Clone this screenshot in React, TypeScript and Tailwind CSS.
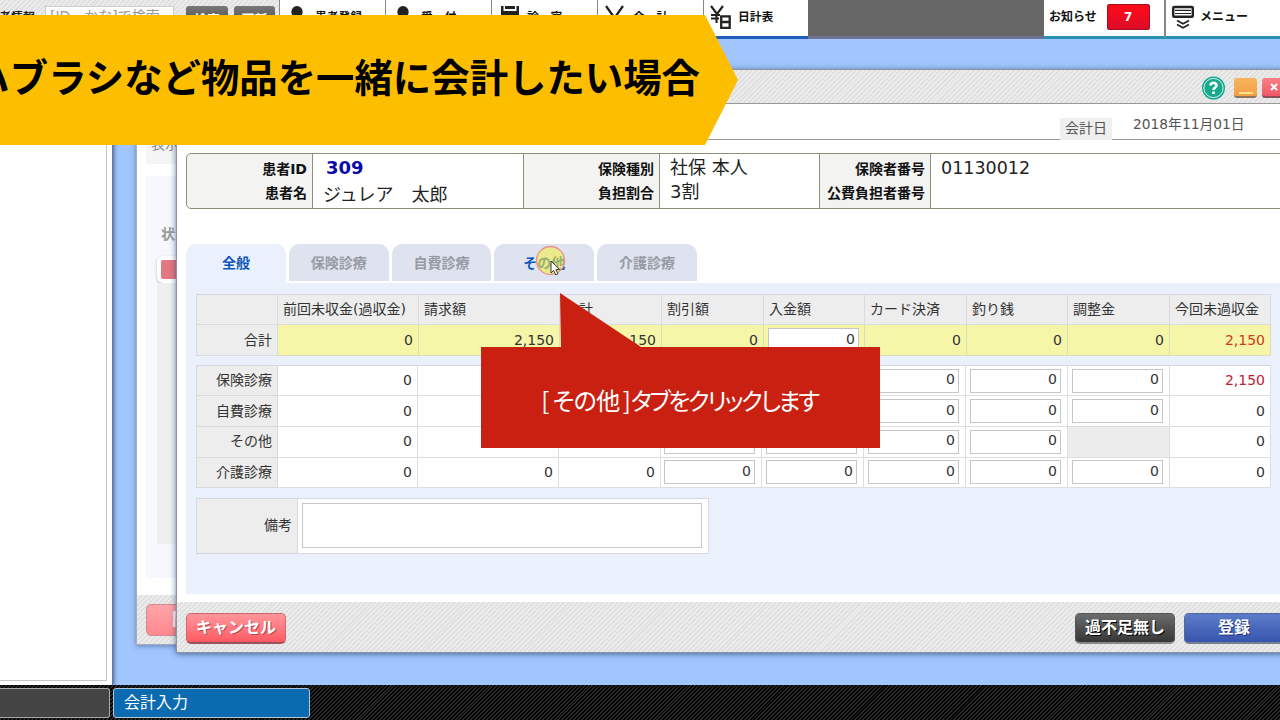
import React, { useState } from 'react';
import clsx from 'clsx';

const stripes = 'bg-[repeating-linear-gradient(135deg,#dedede_0px,#dedede_1.4px,#ebebeb_1.4px,#ebebeb_3.5px)]';

const PersonIcon = () => (
  <svg width="22" height="28" viewBox="0 0 22 28" fill="#222">
    <ellipse cx="10" cy="9" rx="5.7" ry="6" />
    <path d="M0 28c0-9 4-12 10-12s10 3 10 12z" />
  </svg>
);

const ClipboardIcon = () => (
  <svg width="18" height="28" viewBox="0 0 18 28" fill="#222">
    <path d="M0 3h2.500v5h13V3H18v24H0z" />
    <path d="M4 3h10v3H4z" />
  </svg>
);

const YenIcon = () => (
  <svg width="20" height="28" viewBox="0 0 20 28" fill="none" stroke="#222" strokeWidth="2.2">
    <path d="M1 3l8.500 12L18 3M9.500 15v12M3 17h13M3 21h13" />
  </svg>
);

const DailyIcon = () => (
  <svg width="24" height="28" viewBox="0 0 24 28" fill="none" stroke="#222" strokeWidth="2.1">
    <path d="M1 3l6 8 6-8M6.500 11v9M1 12h9M1 15.500h8" />
    <path d="M11.200 13.300h8.500v11.500h-8.500zM11.200 19h8.500" strokeWidth="2.3" />
  </svg>
);

const MenuIcon = () => (
  <svg width="22" height="26" viewBox="0 0 22 26" fill="none" stroke="#222">
    <rect x="1.2" y="3" width="19.6" height="9.8" rx="1" strokeWidth="2.4" />
    <path d="M3 6.3h16M3 9.500h16" strokeWidth="1.2" />
    <path d="M5 16.500l6 3.300 6-3.300M5 20.500l6 3.300 6-3.300" strokeWidth="1.6" />
  </svg>
);

const navItems = [
  { label: '患者登録', icon: <PersonIcon />, item: 'w-[106px] pl-[7px]', text: 'pl-[6px]' },
  { label: '受　付', icon: <PersonIcon />, item: 'w-[106px] pl-[7px]', text: 'pl-[6px]' },
  { label: '診　察', icon: <ClipboardIcon />, item: 'w-[106px] pl-[9px]', text: 'pl-2' },
  { label: '会　計', icon: <YenIcon />, item: 'w-[106px] pl-[7px]', text: 'pl-2' },
  { label: '日計表', icon: <DailyIcon />, item: 'w-[105px] pl-[6px]', text: 'pl-1' },
];

const tabs = ['全般', '保険診療', '自費診療', 'その他', '介護診療'];

const headers = ['', '前回未収金(過収金)', '請求額', '合計', '割引額', '入金額', 'カード決済', '釣り銭', '調整金', '今回未過収金'];
const totals = ['0', '2,150', '2,150', '0', '0', '0', '0', '0', '2,150'];

const rows = [
  { label: '保険診療', cells: ['0', '2,150', '2,150', '0', '0', '0', '0', '0', '2,150'] },
  { label: '自費診療', cells: ['0', '0', '0', '0', '0', '0', '0', '0', '0'] },
  { label: 'その他', cells: ['0', '0', '0', '0', '0', '0', '0', null, '0'] },
  { label: '介護診療', cells: ['0', '0', '0', '0', '0', '0', '0', '0', '0'] },
];

const MoneyBox = ({ value }: { value: string }) => (
  <div className="flex h-6 w-[91px] shrink-0 items-center justify-end border border-[#c6c6c6] bg-white pr-[3px] pb-[2px]">{value}</div>
);

const TopBar = () => (
  <header className="flex h-[39px] w-full shrink-0 text-[12px] font-bold text-[#111]">
    <div className={clsx('flex w-[279px] shrink-0 items-start pt-1.5', stripes)}>
      <div className="flex h-5 w-[35px] shrink-0 items-center justify-end pt-1 whitespace-nowrap text-[#222]">患者情報</div>
      <div className="ml-[10px] h-5 w-[129px] border border-[#ccc] bg-white pl-1 text-[14px] leading-[19px] font-normal whitespace-nowrap text-[#999]">[ID、かな]で検索</div>
      <div className="ml-3 h-6 w-[42px] rounded-[3px] bg-gradient-to-b from-[#777] to-[#444] pt-[2px] text-center text-[13px] leading-[23px] text-white">検索</div>
      <div className="ml-1.5 h-6 w-[41px] rounded-[3px] bg-gradient-to-b from-[#777] to-[#444] pt-[2px] text-center text-[13px] leading-[23px] text-white">更新</div>
    </div>
    {navItems.map((item) => (
      <div key={item.label} className={clsx('flex shrink-0 border-b-[3px] border-l border-b-[#1f5fba] border-l-[#888] bg-white pt-[3px]', item.item)}>
        {item.icon}
        <span className={clsx('pt-[5px] text-[11.8px] leading-[18px] whitespace-nowrap', item.text)}>{item.label}</span>
      </div>
    ))}
    <div className="w-[236px] shrink-0 border-b-[3px] border-[#6e7294] bg-[#666]" />
    <div className="flex w-[120px] shrink-0 border-b-[3px] border-[#2790b3] bg-white pt-1 pl-[5px]">
      <span className="pt-[4px] leading-[18px]">お知らせ</span>
      <span className="ml-[10px] h-[26px] w-[43px] rounded-xs border border-[#a01020] bg-gradient-to-b from-[#ff0a14] to-[#dd0b28] text-center leading-6 text-white">7</span>
    </div>
    <div className="flex w-[116px] shrink-0 border-b-[3px] border-l-2 border-b-[#2790b3] border-l-[#888] bg-white pt-1 pl-[6px]">
      <MenuIcon />
      <span className="pt-[4px] pl-[6px] leading-[18px]">メニュー</span>
    </div>
  </header>
);

const PatientInfo = () => (
  <div className="ml-[9px] flex h-14 w-[1110px] shrink-0 rounded-[5px] border border-[#8f8f78] bg-[#f3f3f1] text-[14px]">
    <div className="w-[126px] border-r border-[#8f8f78] pt-[3px] pr-[5px] text-right leading-6 font-bold text-[#111]">
      <p>患者ID</p>
      <p>患者名</p>
    </div>
    <div className="w-[211px] border-r border-[#8f8f78] bg-white pl-2.5 text-[18px] leading-[27px]">
      <p className="pl-[3px] font-bold text-[#0a0aa8]">309</p>
      <p>ジュレア　太郎</p>
    </div>
    <div className="w-[136px] border-r border-[#8f8f78] pt-[3px] pr-[5px] text-right leading-6 font-bold text-[#111]">
      <p>保険種別</p>
      <p>負担割合</p>
    </div>
    <div className="w-[160px] border-r border-[#8f8f78] bg-white pt-[2px] pl-[10px] text-[18px] leading-6">
      <p>社保 本人</p>
      <p>3割</p>
    </div>
    <div className="w-[111px] border-r border-[#8f8f78] pt-[3px] pr-[5px] text-right leading-6 font-bold whitespace-nowrap text-[#111]">
      <p>保険者番号</p>
      <p>公費負担者番号</p>
    </div>
    <div className="flex-1 bg-white pt-[2px] pl-[10px] text-[17.5px] leading-6">01130012</div>
  </div>
);

const TotalTable = () => (
  <div className="grid w-[1075px] grid-cols-[81px_141px_141px_102px_102px_101px_102px_101px_102px_101px] grid-rows-[30px_31px] border-t border-l border-[#d4d9e2]">
    {headers.map((h, i) => (
      <div key={i} className="flex items-center border-r border-b border-[#d8dade] bg-[#ededed] pl-[5px] whitespace-nowrap">{h}</div>
    ))}
    <div className="flex items-center justify-end border-r border-b border-[#d8dade] bg-[#ededed] pr-[5px]">合計</div>
    {totals.map((t, i) => (
      <div
        key={i}
        className={clsx(
          'flex items-center justify-end border-r border-b border-[#dcdcb8] bg-[#f6f6a8] pr-[5px]',
          i === 8 && 'text-[#cf3a1c]',
        )}
      >
        {i === 4 ? <MoneyBox value={t} /> : t}
      </div>
    ))}
  </div>
);

const DetailTable = () => (
  <div className="mt-[9px] w-[1075px] border-t border-l border-[#d4d9e2]">
    {rows.map((row, r) => (
      <div
        key={row.label}
        className={clsx(
          'grid grid-cols-[81px_140px_141px_102px_101px_102px_102px_102px_102px_101px]',
          r === 1 ? 'h-[31px]' : 'h-[30.3px]',
        )}
      >
        <div className="flex items-center justify-end border-r border-b border-[#d8dade] bg-[#ededed] pr-[5px]">{row.label}</div>
        {row.cells.map((cell, i) => {
          const editable = i > 2 && i < 8;
          return (
            <div
              key={i}
              className={clsx(
                'flex items-center justify-end border-r border-b border-[#dcdee2]',
                cell === null ? 'bg-[#ececec]' : 'bg-white',
                i === 8 && r === 0 && 'text-[#c22036]',
                editable ? 'pr-[6px]' : 'pr-[5px]',
              )}
            >
              {cell !== null && (editable ? <MoneyBox value={cell} /> : cell)}
            </div>
          );
        })}
      </div>
    ))}
  </div>
);

const BackWindow = () => (
  <section className="absolute top-[100px] left-[136px] flex h-[545px] w-[200px] flex-col border border-[#a8adb8] bg-white shadow-[0_1px_5px_rgba(40,60,110,0.5)]">
    <div className="ml-[9px] h-[63px] bg-[#f5f5f6] pt-[33px] pl-[5px] text-[14px] leading-5 text-[#888]">表示</div>
    <div className="mt-3 ml-[9px] h-[402px] bg-[#f6f8fe] pt-12 pl-[11px]">
      <p className="pl-[4px] text-[14px] leading-5 font-bold text-[#999]">状況</p>
      <div className="mt-3 h-[27px] w-40 rounded-md border-4 border-white bg-[#e57780] shadow-[0_1px_3px_#bbb]" />
      <div className="h-[261px] bg-[#efefef]" />
    </div>
    <div className={clsx('mt-auto h-[49px] pt-[9px] pl-[9px]', stripes)}>
      <div className="h-8 w-24 rounded-[5px] border border-[#cf8d92] bg-gradient-to-b from-[#ffa4aa] to-[#ff888e] pl-[25px] text-[17px] leading-7 font-bold text-white">閉じる</div>
    </div>
  </section>
);

const PaymentWindow = () => {
  const [activeTab, setActiveTab] = useState('全般');

  return (
    <section className="absolute top-[69px] left-[176px] flex h-[584px] w-[1130px] flex-col border border-[#8e939d] bg-white shadow-[0_1px_6px_rgba(30,50,100,0.65)]">
      {/* Title bar */}
      <div className={clsx('flex h-[34px] shrink-0 items-center border-b border-[#999]', stripes)}>
        <svg className="mt-[2px] ml-[1024px] shrink-0" width="24" height="24" viewBox="0 0 24 24">
          <circle cx="12.5" cy="12" r="11.5" fill="#16a98c" />
          <circle cx="12.5" cy="12" r="9.6" fill="none" stroke="#d9f3ec" strokeWidth="1" />
          <path d="M9.500 9.500c0-3.600 6.200-3.400 6 0-.1 2-3 2-3 4.500M12.500 15.500v2.500" fill="none" stroke="#fff" strokeWidth="2.6" />
        </svg>
        <button className="mt-[3px] ml-[9px] flex h-5 w-[23px] shrink-0 items-end justify-center rounded-[3px] border-b-2 border-[#8c755c] bg-gradient-to-b from-[#f7b55e] to-[#f3a043] pb-[2px]">
          <span className="h-[2px] w-[14px] bg-[#ffe08a]" />
        </button>
        <button className="mt-[3px] ml-[5px] flex h-5 w-[23px] shrink-0 items-center justify-center rounded-[3px] border-b-2 border-[#8a5058] bg-gradient-to-b from-[#fa8088] to-[#ee5864]">
          <svg width="8" height="8" viewBox="0 0 8 8" stroke="#fff" strokeWidth="2">
            <path d="M1 1l6 6M7 1L1 7" />
          </svg>
        </button>
      </div>

      {/* Accounting date */}
      <div className="flex h-9 shrink-0 border-b border-[#999] text-[14px] text-[#555]">
        <span className="mt-[14px] ml-[883px] h-[22px] w-[52px] bg-[#efefef] text-center leading-[20px]">会計日</span>
        <span className="mt-2 ml-[21px] text-[13.8px] leading-6">2018年11月01日</span>
      </div>
      <div className="h-[13px] shrink-0" />
      <PatientInfo />

      {/* Category tabs */}
      <div className="mt-[35px] ml-[9px] flex h-[39px] shrink-0 gap-[3px]">
        {tabs.map((tab) => (
          <button
            key={tab}
            onClick={() => setActiveTab(tab)}
            className={clsx(
              'w-[99.8px] rounded-t-[10px] text-[14px] font-bold',
              tab === activeTab ? 'h-[42px] bg-[#ebf0fd] pb-[4px] text-[#0d56b8]' : 'h-[37px] bg-[#dfe3ef] pt-[1px]',
              tab !== activeTab && (tab === 'その他' ? 'text-[#0d56b8]' : 'text-[#969aa3]'),
            )}
          >
            {tab}
          </button>
        ))}
      </div>

      <div className="ml-[9px] h-[311px] w-[1110px] shrink-0 bg-[#ebf0fd] pt-[11px] pl-[10px] text-[14px] text-[#333]">
        <TotalTable />
        <DetailTable />
        <div className="mt-[10px] flex h-14 w-[513px] border border-[#d4d8e0] bg-white">
          <div className="flex w-[101px] items-center justify-end border-r border-[#d8dade] bg-[#ededed] pr-[5px]">備考</div>
          <div className="m-1 mr-1.5 mb-[5px] flex-1 border border-[#c8c8c8]" />
        </div>
      </div>

      {/* Actions */}
      <div className={clsx('mt-auto flex h-[50px] shrink-0 pt-[11px] pl-[9px] text-[16px] font-bold text-white', stripes)}>
        <button className="h-[31px] w-[100px] rounded-[5px] border border-b-2 border-[#cc6870] border-b-[#98545a] bg-gradient-to-b from-[#ff969c] to-[#fd5862] leading-6 [text-shadow:1px_1px_0_#b64a52]">キャンセル</button>
        <button className="ml-[789px] h-[31px] w-[100px] rounded-[5px] border border-b-2 border-[#555] border-b-[#888] bg-gradient-to-b from-[#6c6c6c] to-[#373737] leading-6 whitespace-nowrap [text-shadow:1px_1px_0_#000]">過不足無し</button>
        <button className="ml-[9px] h-[31px] w-[100px] rounded-[5px] border border-b-2 border-[#5265a0] border-b-[#777f94] bg-gradient-to-b from-[#5d7cc8] to-[#3855ae] leading-6 [text-shadow:1px_1px_0_#223878]">登録</button>
      </div>
    </section>
  );
};

const App = () => {
  return (
    <div className="relative flex h-[720px] w-[1280px] flex-col overflow-hidden bg-[#a0c6fd] font-['DejaVu_Sans','Noto_Sans_CJK_JP',sans-serif] text-[#222]">
      <TopBar />

      <main className="flex-1">
        <div className="h-full w-[113px] border-r border-[#66799c] bg-white pb-[4px] shadow-[1px_0_4px_rgba(30,50,90,0.7)]">
          <div className="h-full w-[107px] border-r border-b border-[#c8c6c0]" />
        </div>
        <BackWindow />
        <PaymentWindow />
      </main>

      {/* Task bar */}
      <footer className="relative flex h-[35px] shrink-0 bg-[repeating-linear-gradient(135deg,#000_0px,#000_1.4px,#292929_1.4px,#292929_2.8px)] pt-[3px] pb-[2px]">
        <div className="w-[110px] rounded-r-[3px] border border-l-0 border-[#aaa] bg-[#444]" />
        <div className="ml-[3px] w-[197px] rounded-[3px] border border-[#b5c6d4] bg-[#0b6bb0] pl-[10px] text-[16px] leading-7 text-white">会計入力</div>
      </footer>

      {/* Caption banner */}
      <div className="absolute top-[15px] left-0 flex h-[130px] w-[738px] items-center justify-end overflow-hidden bg-[#fdbe00] pr-[38px] text-[38.4px] font-bold whitespace-nowrap text-black [clip-path:polygon(0_0,705px_0,738px_65px,705px_130px,0_130px)]">
        <span className="pb-[2px] leading-none">ハブラシなど物品を一緒に会計したい場合</span>
      </div>

      {/* Pointer with click highlight */}
      <svg className="absolute top-[245px] left-[534px]" width="34" height="34" viewBox="0 0 34 34">
        <circle cx="16.5" cy="15.5" r="14" fill="#f4ed45" fillOpacity="0.6" stroke="#e79090" strokeWidth="1.3" />
        <path d="M17 16v12l2.700-2.500 2 4.300 2.200-1-2-4.200h3.600z" fill="#fff" stroke="#333" strokeWidth="1" />
      </svg>

      {/* Instruction callout */}
      <div className="absolute top-[293px] left-[481px] h-[156px] w-[399px]">
        <svg className="block" width="399" height="54" viewBox="0 0 399 54">
          <path d="M79 0L160 54H80z" fill="#c92012" />
        </svg>
        <div className="flex h-[101px] items-center justify-center bg-[#c92012] pt-1 pr-[2px] font-['Noto_Sans_CJK_JP',sans-serif] text-[24px] whitespace-nowrap text-white [font-feature-settings:'palt']">
          <span className="mr-[3px]">[</span>
          <span className="tracking-[-0.5px]">その他</span>
          <span className="ml-[3px]">]</span>
          <span className="tracking-[-2.3px]">タブをクリックします</span>
        </div>
      </div>
    </div>
  );
};

export default App;
